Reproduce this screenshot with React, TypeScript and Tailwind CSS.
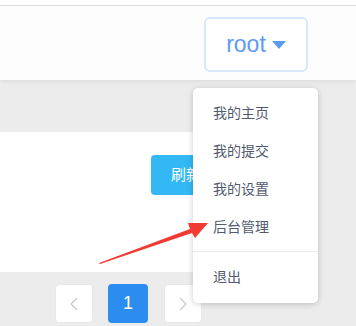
import React from 'react';

const menuItems = ['我的主页', '我的提交', '我的设置', '后台管理'];

const App: React.FC = () => {
    return (
        <div
            className="relative w-[356px] h-[326px] overflow-hidden bg-[#ececec]"
            style={{ fontFamily: '"Liberation Sans", "Noto Sans CJK SC", sans-serif' }}
        >
            {/* header */}
            <div className="h-[5px] bg-white" />
            <div className="h-px bg-[#dcdce4]" />
            <div className="h-[74px] bg-[#fdfdfd] flex items-center justify-end pr-[48px] shadow-[0_2px_4px_rgba(0,0,0,0.06)] relative z-10">
                <button className="mt-[3px] w-[104px] h-[55px] rounded-[6px] border-2 border-[#d8e8fc] bg-white flex items-center justify-center gap-[6px] text-[#5b9cf2]">
                    <span className="text-[23px] leading-none">root</span>
                    <svg width="14" height="8" viewBox="0 0 14 8" className="mt-[1px]">
                        <path d="M0 0 H14 L7 8 Z" fill="#5b9cf2" />
                    </svg>
                </button>
            </div>

            {/* content */}
            <div className="pt-[52px]">
                <div className="w-[300px] h-[140px] bg-white pt-[23px] pl-[151px]">
                    <button className="w-[62px] h-[40px] rounded-[4px] bg-[#33b8f5] text-white text-[15px] text-left pl-[20px]">
                        刷新
                    </button>
                </div>
                <div className="mt-[12px] flex items-center pl-[55px] gap-[15px]">
                    <div className="w-[38px] h-[39px] rounded-[4px] bg-white border border-[#e6e8eb] flex items-center justify-center">
                        <svg width="8" height="14" viewBox="0 0 8 14"><path d="M7 1 L1 7 L7 13" fill="none" stroke="#c5c8ce" strokeWidth="1.2" /></svg>
                    </div>
                    <div className="w-[40px] h-[39px] rounded-[4px] bg-[#2d8cf0] flex items-center justify-center text-white text-[18px]">
                        1
                    </div>
                    <div className="ml-px w-[38px] h-[39px] rounded-[4px] bg-white border border-[#e6e8eb] flex items-center justify-center">
                        <svg width="8" height="14" viewBox="0 0 8 14"><path d="M1 1 L7 7 L1 13" fill="none" stroke="#c5c8ce" strokeWidth="1.2" /></svg>
                    </div>
                </div>
            </div>

            {/* dropdown */}
            <div className="absolute left-[193px] top-[88px] w-[125px] bg-white rounded-[5px] shadow-[0_1px_6px_rgba(0,0,0,0.2)] pt-[6px] pb-[7px] z-20">
                {menuItems.map(item => (
                    <div key={item} className="h-[38px] flex items-center pl-[20px] text-[14px] text-[#515a6e]">
                        {item}
                    </div>
                ))}
                <div className="h-px bg-[#e8eaec] mt-[5px] mb-[6px]" />
                <div className="h-[38px] flex items-center pl-[20px] text-[14px] text-[#515a6e]">退出</div>
            </div>

            {/* annotation arrow */}
            <svg className="absolute left-0 top-0 z-30 pointer-events-none" width="356" height="326">
                <path d="M99 263 L190 229 L188 223 L208 223 L195 238 L192 233 L100 264 Z" fill="#f23a35" />
            </svg>
        </div>
    );
};

export default App;
